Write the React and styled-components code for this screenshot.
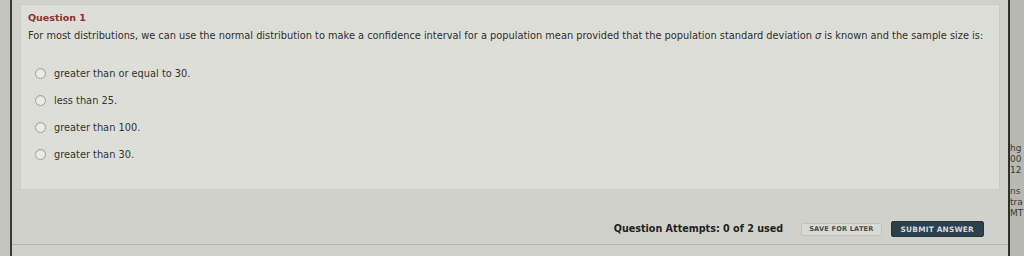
import styled, { createGlobalStyle } from "styled-components";

const Global = createGlobalStyle`
  html, body { margin: 0; padding: 0; }
  body {
    width: 1024px;
    height: 256px;
    overflow: hidden;
    background: #c8c8c2;
    font-family: "DejaVu Sans", Verdana, sans-serif;
  }
`;

const Screen = styled.div`
  display: flex;
  width: 1024px;
  height: 256px;
`;

const Gutter = styled.div`
  width: 10px;
  background: #c4c4be;
  border-right: 2px solid #3a3a38;
`;

const Panel = styled.div`
  width: 996px;
  display: flex;
  flex-direction: column;
  background: #d1d1cb;
  padding-top: 4px;
`;

const Card = styled.section`
  margin: 0 8px 0 8px;
  height: 186px;
  box-sizing: border-box;
  background: #deded8;
  border: 1px solid #cbcbc5;
  padding: 7px 8px 0 7px;
`;

const Title = styled.h2`
  margin: 0;
  font-size: 9.5px;
  font-weight: bold;
  color: #8e2f2c;
`;

const Prompt = styled.p`
  margin: 7px 0 0 0;
  font-size: 9.8px;
  color: #2e2e2c;
  white-space: nowrap;
`;

const Options = styled.ul`
  list-style: none;
  margin: 25px 0 0 0;
  padding: 0 0 0 7px;
  display: flex;
  flex-direction: column;
  gap: 13px;
`;

const Option = styled.li`
  display: flex;
  align-items: center;
  gap: 8px;
  font-size: 9.8px;
  color: #333331;
  height: 14px;
`;

const Radio = styled.span`
  width: 9px;
  height: 9px;
  border-radius: 50%;
  border: 1px solid #a2a29c;
  background: #ecece7;
  box-shadow: inset 0 1px 1px rgba(0, 0, 0, 0.08);
`;

const Footer = styled.footer`
  height: 55px;
  display: flex;
  align-items: flex-start;
  justify-content: flex-end;
  gap: 18px;
  padding: 31px 24px 0 0;
  box-sizing: border-box;
  border-bottom: 1px solid #b5b5af;
`;

const Attempts = styled.span`
  font-size: 9.6px;
  line-height: 16px;
  font-weight: bold;
  color: #222220;
`;

const Buttons = styled.div`
  display: flex;
  align-items: center;
  height: 16px;
  gap: 9px;
`;

const Button = styled.button`
  font-family: "DejaVu Sans", Verdana, sans-serif;
  font-size: ${(p) => (p.$primary ? "7.4px" : "6.6px")};
  font-weight: bold;
  letter-spacing: 0.2px;
  border-radius: 2px;
  cursor: pointer;
  padding: 0 ${(p) => (p.$primary ? "9px" : "7px")};
  height: ${(p) => (p.$primary ? "16px" : "13px")};
  background: ${(p) => (p.$primary ? "#2b3f4d" : "#d9d9d3")};
  color: ${(p) => (p.$primary ? "#d4d9dc" : "#4a4a48")};
  border: 1px solid ${(p) => (p.$primary ? "#233440" : "#c2c2bc")};
`;

const Side = styled.aside`
  flex: 1;
  border-left: 2px solid #2f2f2d;
  background: #b8b8b2;
  display: flex;
  flex-direction: column;
  padding-top: 143px;
  font-size: 9px;
  line-height: 11px;
  color: #3a3a38;
  overflow: hidden;
  white-space: nowrap;
`;

const SideGap = styled.div`
  height: 10px;
`;

const options = [
  "greater than or equal to 30.",
  "less than 25.",
  "greater than 100.",
  "greater than 30.",
];

export default function App() {
  return (
    <Screen>
      <Global />
      <Gutter />
      <Panel>
        <Card>
          <Title>Question 1</Title>
          <Prompt>
            For most distributions, we can use the normal distribution to make a
            confidence interval for a population mean provided that the
            population standard deviation <i>σ</i> is known and the sample size
            is:
          </Prompt>
          <Options>
            {options.map((o) => (
              <Option key={o}>
                <Radio />
                {o}
              </Option>
            ))}
          </Options>
        </Card>
        <Footer>
          <Attempts>Question Attempts: 0 of 2 used</Attempts>
          <Buttons>
            <Button>SAVE FOR LATER</Button>
            <Button $primary>SUBMIT ANSWER</Button>
          </Buttons>
        </Footer>
      </Panel>
      <Side>
        <span>hg</span>
        <span>00</span>
        <span>12</span>
        <SideGap />
        <span>ns</span>
        <span>tra</span>
        <span>MT</span>
      </Side>
    </Screen>
  );
}
